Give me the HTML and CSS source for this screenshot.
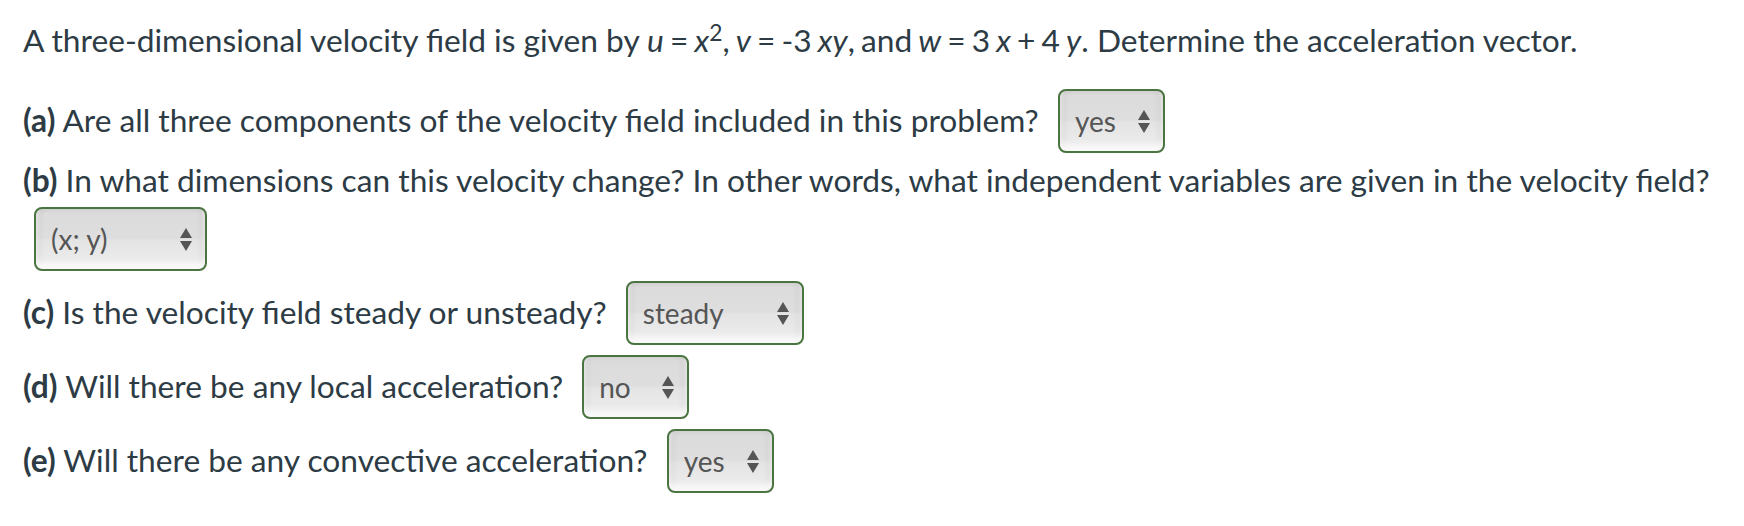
FILE: index.html
```html
<!DOCTYPE html>
<html lang="en">

<head>
    <meta charset="UTF-8">
    <meta name="viewport" content="width=device-width, initial-scale=1.0">
    <title>Velocity Field Quiz</title>
    <link rel="stylesheet" href="styles.css">
</head>

<body>
    <section class="question">
        <p class="intro">A three-dimensional velocity field is given by <span class="math"><i>u</i> = <i>x</i><sup>2</sup>, <i>v</i> = -3 <i>xy</i>, and <i>w</i> = 3 <i>x</i> + 4 <i>y</i>.</span> Determine the acceleration vector.</p>

        <div class="q q-a">
            <b>(a)</b> Are all three components of the velocity field included in this problem?
            <span class="pick pick-short"><span class="val">yes</span><svg class="arrows" viewBox="0 0 12 23"><polygon points="6,0 12,10 0,10"/><polygon points="0,13 12,13 6,23"/></svg></span>
        </div>

        <div class="q q-b">
            <b>(b)</b> In what dimensions can this velocity change? In other words, what independent variables are given in the velocity field?
            <span class="pick pick-dims"><span class="val">(x; y)</span><svg class="arrows" viewBox="0 0 12 23"><polygon points="6,0 12,10 0,10"/><polygon points="0,13 12,13 6,23"/></svg></span>
        </div>

        <div class="q">
            <b>(c)</b> Is the velocity field steady or unsteady?
            <span class="pick pick-state"><span class="val">steady</span><svg class="arrows" viewBox="0 0 12 23"><polygon points="6,0 12,10 0,10"/><polygon points="0,13 12,13 6,23"/></svg></span>
        </div>

        <div class="q">
            <b>(d)</b> Will there be any local acceleration?
            <span class="pick pick-short"><span class="val">no</span><svg class="arrows" viewBox="0 0 12 23"><polygon points="6,0 12,10 0,10"/><polygon points="0,13 12,13 6,23"/></svg></span>
        </div>

        <div class="q">
            <b>(e)</b> Will there be any convective acceleration?
            <span class="pick pick-short"><span class="val">yes</span><svg class="arrows" viewBox="0 0 12 23"><polygon points="6,0 12,10 0,10"/><polygon points="0,13 12,13 6,23"/></svg></span>
        </div>
    </section>
</body>

</html>
```

FILE: styles.css
```css
* {
    margin: 0;
    padding: 0;
    box-sizing: border-box;
}

body {
    background-color: #fff;
    color: #2d3b45;
    font-family: Lato, "Noto Sans", sans-serif;
    font-size: 31.7px;
    line-height: 48px;
    padding: 16px 10px 9px 23px;
}

.intro {
    margin-bottom: 19px;
}

.math {
    word-spacing: -2px;
}

sup {
    font-size: 0.72em;
    line-height: 0;
    vertical-align: 0.5em;
}

b {
    font-weight: bold;
}

/* rows after (b) sit a little apart */
.q {
    margin-bottom: 4px;
}

.q-a {
    margin-bottom: 0;
}

/* (b) is the long one: its select drops to its own line */
.q-b {
    line-height: 54px;
}

/* drop-down look */
.pick {
    display: inline-flex;
    align-items: center;
    justify-content: space-between;
    height: 64px;
    margin: 6px 0 0 11px;
    padding: 0 13px 0 15px;
    border: 2px solid #4a7440;
    border-radius: 8px;
    background: linear-gradient(to bottom, #dbdbdb 0%, #dedede 48%, #e4e4e4 52%, #eeeeee 100%);
    box-shadow: inset 0 -6px 6px rgba(255, 255, 255, 0.8), inset 5px 0 5px rgba(0, 0, 0, 0.05), inset -5px 0 5px rgba(0, 0, 0, 0.05);
    color: #555;
    font-size: 28px;
    vertical-align: baseline;
}

.q-b .pick {
    margin-top: 0;
}

.val {
    line-height: 34px;
}

.arrows {
    width: 12px;
    height: 23px;
    fill: #555;
}

.pick-short {
    width: 107px;
}

.pick-dims {
    width: 173px;
}

.pick-state {
    width: 178px;
}
```
